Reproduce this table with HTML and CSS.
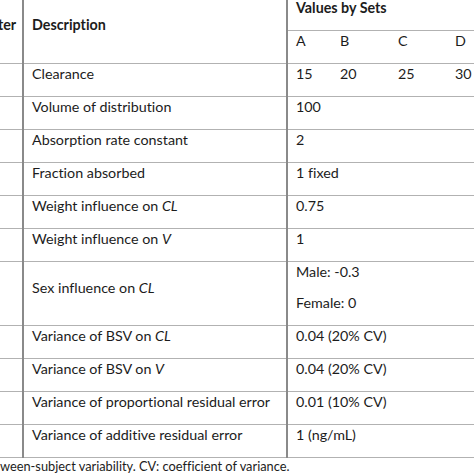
FILE: index.html
```html
<!DOCTYPE html>
<html>
<head>
<meta charset="utf-8">
<link rel="stylesheet" href="styles.css">
</head>
<body>
<div class="frame">
  <table class="params">
    <colgroup>
      <col class="c-param">
      <col class="c-desc">
      <col class="c-a">
      <col class="c-b">
      <col class="c-c">
      <col class="c-d">
    </colgroup>
    <thead>
      <tr>
        <th rowspan="2" class="head sep">Parameter</th>
        <th rowspan="2" class="head sep">Description</th>
        <th colspan="4" class="head">Values by Sets</th>
      </tr>
      <tr>
        <td>A</td><td>B</td><td>C</td><td>D</td>
      </tr>
    </thead>
    <tbody>
      <tr><td class="sep"></td><td class="sep">Clearance</td><td>15</td><td>20</td><td>25</td><td>30</td></tr>
      <tr><td class="sep"></td><td class="sep">Volume of distribution</td><td colspan="4">100</td></tr>
      <tr><td class="sep"></td><td class="sep">Absorption rate constant</td><td colspan="4">2</td></tr>
      <tr><td class="sep"></td><td class="sep">Fraction absorbed</td><td colspan="4">1 fixed</td></tr>
      <tr><td class="sep"></td><td class="sep">Weight influence on <i>CL</i></td><td colspan="4">0.75</td></tr>
      <tr><td class="sep"></td><td class="sep">Weight influence on <i>V</i></td><td colspan="4">1</td></tr>
      <tr class="tall"><td class="sep"></td><td class="sep">Sex influence on <i>CL</i></td><td colspan="4"><p class="line">Male: -0.3</p><p class="line">Female: 0</p></td></tr>
      <tr><td class="sep"></td><td class="sep">Variance of BSV on <i>CL</i></td><td colspan="4">0.04 (20% CV)</td></tr>
      <tr><td class="sep"></td><td class="sep">Variance of BSV on <i>V</i></td><td colspan="4">0.04 (20% CV)</td></tr>
      <tr><td class="sep"></td><td class="sep">Variance of proportional residual error</td><td colspan="4">0.01 (10% CV)</td></tr>
      <tr><td class="sep"></td><td class="sep">Variance of additive residual error</td><td colspan="4">1 (ng/mL)</td></tr>
    </tbody>
  </table>
  <p class="note">ween-subject variability. CV: coefficient of variance.</p>
</div>
</body>
</html>
```
FILE: styles.css
```css
html, body {
  margin: 0;
  padding: 0;
  background: #ffffff;
}
.frame {
  width: 474px;
  height: 474px;
  overflow: hidden;
  font-family: Lato, "Open Sans", sans-serif;
  font-size: 14.3px;
  font-variant-ligatures: none;
  font-feature-settings: "liga" 0, "clig" 0;
  color: #1c1c1c;
}
.params {
  border-collapse: collapse;
  table-layout: fixed;
  width: 562px;
  margin-top: -3px;
  margin-left: -58px;
}
.c-param { width: 81px; }
.c-desc { width: 264px; }
.c-a { width: 45px; }
.c-b { width: 58px; }
.c-c { width: 57px; }
.c-d { width: 57px; }
.params th,
.params td {
  text-align: left;
  vertical-align: middle;
  padding: 1px 8px 14px 8px;
  line-height: 17px;
  border-top: 1px solid #b2b2b2;
  border-bottom: 1px solid #b2b2b2;
  white-space: nowrap;
  overflow: hidden;
}
.params th.head {
  font-weight: bold;
}
.params .sep {
  border-right: 2px solid #8a8a8a;
}
.params tbody tr,
.params thead tr {
  height: 33px;
}
.params tr.tall {
  height: 64px;
}
.line {
  margin: 0;
}
.line + .line {
  margin-top: 14px;
}
.note {
  margin: 0;
  font-size: 12.8px;
  line-height: 17px;
  white-space: nowrap;
}
```
